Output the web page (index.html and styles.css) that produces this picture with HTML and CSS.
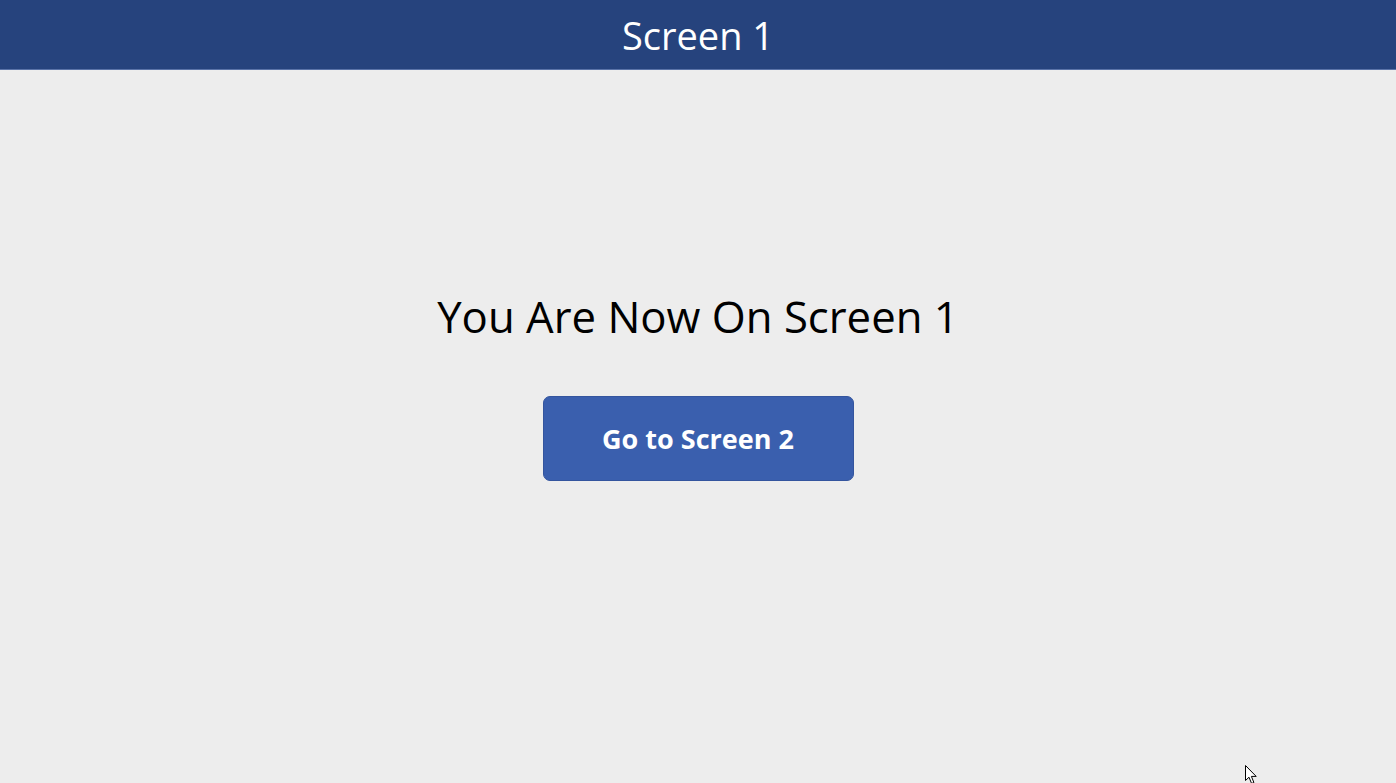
FILE: index.html
```html
<!DOCTYPE html>
<html lang="en">
<head>
<meta charset="utf-8">
<title>Screen 1</title>
<link rel="stylesheet" href="styles.css">
</head>
<body>
<header class="topbar">
  <h1 class="topbar-title">Screen 1</h1>
</header>
<main class="content">
  <h2 class="headline">You Are Now On Screen 1</h2>
  <button class="nav-button" type="button">Go to Screen 2</button>
</main>
<svg class="cursor" width="14" height="20" viewBox="0 0 14 20" aria-hidden="true">
  <path d="M0.5 0.5 L0.5 15.5 L4 12.2 L6.6 18.5 L8.9 17.5 L6.4 11.4 L11.2 11.4 Z" fill="#ffffff" stroke="#000000" stroke-width="1" stroke-linejoin="miter"/>
</svg>
</body>
</html>
```

FILE: styles.css
```css
html, body {
  margin: 0;
  padding: 0;
  height: 100%;
}

body {
  background: #ededed;
  font-family: "Open Sans", "Noto Sans", sans-serif;
  overflow: hidden;
  position: relative;
}

.topbar {
  height: 69px;
  background: #26437d;
  border-bottom: 1px solid #5a73a8;
  display: flex;
  align-items: center;
  justify-content: center;
}

.topbar-title {
  margin: 0;
  color: #ffffff;
  font-size: 38px;
  font-weight: 400;
  line-height: normal;
}

.content {
  display: flex;
  flex-direction: column;
  align-items: center;
  padding-top: 216px;
}

.headline {
  margin: 0;
  font-size: 43.7px;
  font-weight: 400;
  color: #000000;
  line-height: 60px;
}

.nav-button {
  margin-top: 50px;
  width: 311px;
  height: 85px;
  background: #3a5fae;
  border: 1px solid #34559e;
  border-radius: 7px;
  color: #ffffff;
  font-family: "Open Sans", "Noto Sans", sans-serif;
  font-size: 27px;
  font-weight: 700;
  display: flex;
  align-items: center;
  justify-content: center;
  padding: 0;
}

.cursor {
  position: absolute;
  left: 1245px;
  top: 765px;
}
```
